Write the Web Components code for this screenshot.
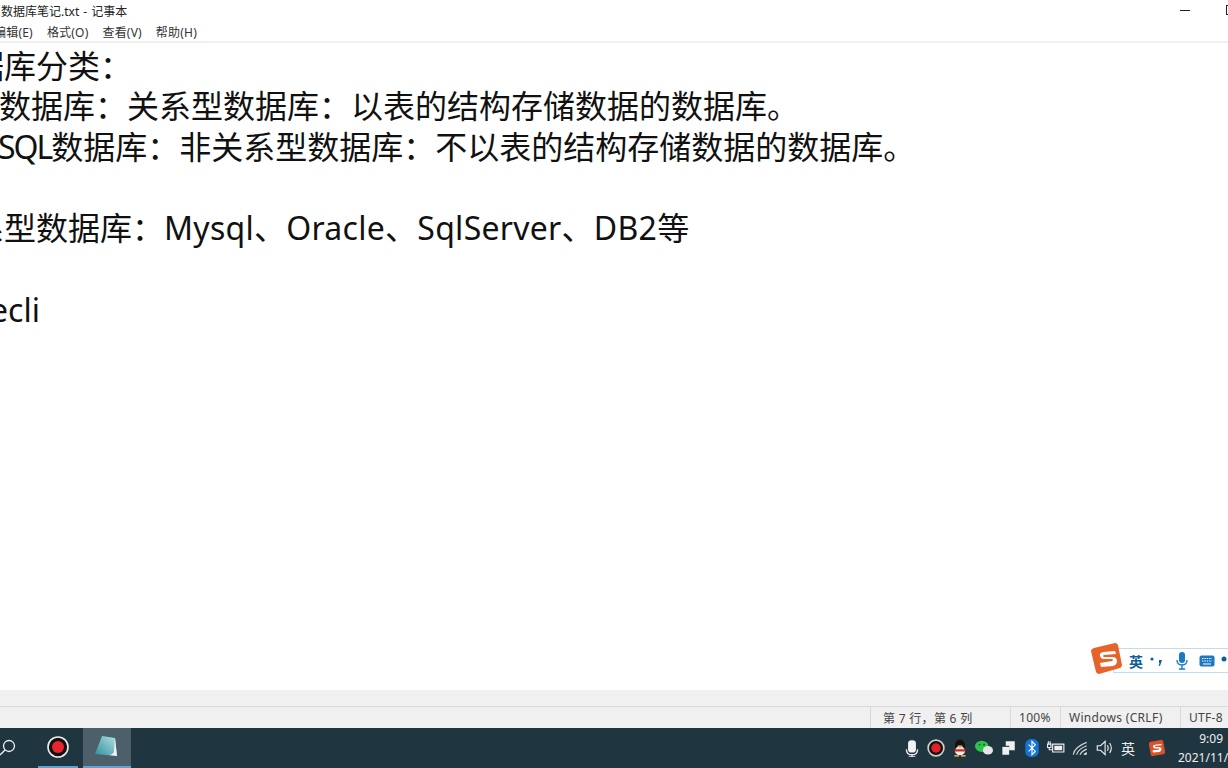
<!DOCTYPE html>
<html lang="zh-CN">
<head>
<meta charset="utf-8">
<title>数据库笔记.txt - 记事本</title>
<style>
  html, body { margin: 0; height: 100%; overflow: hidden; background: #fff; }
  body { font-family: "Noto Sans", "Noto Sans CJK SC", sans-serif; }
</style>
</head>
<body>
<notepad-window>
  <note-line offset="-28">据库分类：</note-line>
  <note-line offset="-1">数据库：关系型数据库：以表的结构存储数据的数据库。</note-line>
  <note-line offset="-2"><span style="letter-spacing:-2px">SQL</span>数据库：非关系型数据库：不以表的结构存储数据的数据库。</note-line>
  <note-line></note-line>
  <note-line offset="-28">系型数据库：<span style="letter-spacing:.27px">Mysql、Oracle、SqlServer、DB2</span>等</note-line>
  <note-line></note-line>
  <note-line offset="-10">ecli</note-line>
</notepad-window>
<ime-bar></ime-bar>
<task-bar></task-bar>

<script>
const FONT = '"Noto Sans", "Noto Sans CJK SC", sans-serif';

class NotepadWindow extends HTMLElement {
  constructor() {
    super();
    this.attachShadow({ mode: 'open' });
  }

  connectedCallback() {
    this.shadowRoot.innerHTML = `
      <style>
        :host { display: flex; flex-direction: column; height: 728px; background: #fff; color: #111; font-family: ${FONT}; overflow: hidden; }
        .title { height: 22px; flex: none; display: flex; align-items: center; justify-content: space-between; font-size: 12px; color: #222; word-spacing: 1px; }
        .title span { padding-left: 1px; }
        .controls { display: flex; align-items: center; height: 100%; overflow: hidden; width: 48px; gap: 36px; box-sizing: border-box; padding-bottom: 2px; }
        .min { width: 10px; height: 1px; background: #222; flex: none; }
        .max { width: 8px; height: 8px; border: 1px solid #222; flex: none; }
        .menu { height: 19px; flex: none; display: flex; gap: 14px; font-size: 12px; letter-spacing: .2px; color: #333; align-items: center; border-bottom: 2px solid #f0f0f0; }
        .menu .edit { margin-left: -6px; }
        .editor { flex: 1; min-height: 0; padding-top: 2.5px; overflow: hidden; white-space: nowrap; }
        .hscroll { height: 16px; flex: none; background: #f0f0f0; }
        .status { height: 21px; flex: none; display: flex; justify-content: flex-end; font-size: 12px; letter-spacing: .3px; color: #444; background: #f0f0f0; border-top: 1px solid #d9d9d9; }
        .status div { border-left: 1px solid #d9d9d9; display: flex; align-items: center; box-sizing: border-box; white-space: nowrap; overflow: hidden; }
      </style>
      <div class="title">
        <span>数据库笔记.txt - 记事本</span>
        <div class="controls"><i class="min"></i><i class="max"></i></div>
      </div>
      <div class="menu">
        <span class="edit">编辑(E)</span><span>格式(O)</span><span>查看(V)</span><span>帮助(H)</span>
      </div>
      <div class="editor"><slot></slot></div>
      <div class="hscroll"></div>
      <div class="status">
        <div style="width:140px;padding-left:12px">第 7 行，第 6 列</div>
        <div style="width:50px;padding-left:8px">100%</div>
        <div style="width:120px;padding-left:8px">Windows (CRLF)</div>
        <div style="width:48px;padding-left:8px">UTF-8</div>
      </div>
    `;
  }
}

class NoteLine extends HTMLElement {
  constructor() {
    super();
    this.attachShadow({ mode: 'open' });
  }

  connectedCallback() {
    const offset = this.getAttribute('offset') || 0;
    this.shadowRoot.innerHTML = `
      <style>
        :host { display: block; height: 40.7px; line-height: 40.7px; font-size: 32px; color: #111; margin-left: ${offset}px; }
      </style>
      <slot></slot>
    `;
  }
}

class ImeBar extends HTMLElement {
  constructor() {
    super();
    this.attachShadow({ mode: 'open' });
  }

  connectedCallback() {
    this.shadowRoot.innerHTML = `
      <style>
        :host { position: absolute; left: 1091px; top: 643px; width: 137px; height: 31px; font-family: ${FONT}; }
        .bar { position: absolute; left: 22px; right: 0; top: 5px; height: 25px; box-sizing: border-box; background: #fff; border: 1px solid #c4dcec; border-right: 0; display: flex; align-items: center; color: #0f5f9f; }
        .zh { margin-left: 15px; font-size: 14px; font-weight: 700; width: 25px; }
        svg { flex: none; display: block; }
        .logo { position: absolute; left: 0; top: 0; z-index: 1; }
      </style>
      <svg class="logo" width="32" height="31" viewBox="0 0 32 31">
        <path d="M3 5 24 0q2 0 3 2l4 20q0 2-2 3L8 31q-2 0-3-2L0 8q0-2 3-3z" fill="#e8622c"/>
        <path d="M24 8 12 9q-4 1-3 4t4 3l8 0q2 1 0 2L9 20l1 4 12-1q4-1 4-5t-5-4l-8 0q-2-1 0-2l12-1z" fill="#fff"/>
      </svg>
      <div class="bar">
        <span class="zh">英</span>
        <svg width="14" height="14" viewBox="0 0 14 14" style="margin-left:5px"><circle cx="3" cy="5" r="1.6" fill="#0f5f9f"/><path d="M10 6h3l-2 6-1.4-.4L10.600 9H10z" fill="#0f5f9f"/></svg>
        <svg width="14" height="18" viewBox="0 0 14 18" style="margin-left:12px"><rect x="4" y="0" width="6" height="11" rx="3" fill="#1b78c2"/><path d="M2 8q0 5 5 5t5-5M7 13v4M4 17h6" fill="none" stroke="#1b78c2" stroke-width="1.400"/></svg>
        <svg width="16" height="12" viewBox="0 0 16 12" style="margin-left:10px"><rect x=".5" y=".5" width="15" height="11" rx="2" fill="#1b78c2"/><path d="M3 3.500h10M3 6h10" stroke="#fff" stroke-dasharray="1.400 1"/><path d="M4 9h8" stroke="#fff"/></svg>
        <svg width="8" height="12" viewBox="0 0 8 12" style="margin-left:5px"><circle cx="4" cy="4" r="2.500" fill="#0f5f9f"/></svg>
      </div>
    `;
  }
}

// icons of the notification area, in order
const TRAY_ICONS = {
  mic: `<rect x="4.500" y="1" width="7" height="11" rx="3" fill="#f2f2f2"/><path d="M3 9q0 5 5 5t5-5M8 14v2M5 16h6" fill="none" stroke="#e8e8e8" stroke-width="1.200"/>`,
  rec: `<circle cx="8" cy="8" r="7" fill="#111" stroke="#ccc" stroke-width="1.500"/><circle cx="8" cy="8" r="4.200" fill="#e0202a"/>`,
  qq: `<ellipse cx="8" cy="6" rx="4.500" ry="5.500" fill="#111"/><ellipse cx="8" cy="10.500" rx="4.500" ry="4" fill="#eee"/><path d="M3.500 9h9l.5 2H3z" fill="#d8242a"/><ellipse cx="8" cy="6.500" rx="2.500" ry="1" fill="#f0a020"/><path d="M3 15h4M9 15h4" stroke="#e8a020" stroke-width="1.500"/>`,
  wechat: `<ellipse cx="6" cy="6.500" rx="6" ry="5" fill="#2fc34a"/><ellipse cx="11.500" cy="10" rx="4.500" ry="3.800" fill="#e6e6e6"/><circle cx="4" cy="5" r=".8" fill="#14532d"/><circle cx="8" cy="5" r=".8" fill="#14532d"/>`,
  copy: `<rect x="6" y="2" width="8" height="8" fill="#efefef"/><rect x="2" y="6" width="7" height="8" fill="#1f3540"/><rect x="3" y="7" width="6" height="7" fill="#efefef"/>`,
  bt: `<rect x="2" y="0" width="12" height="16" rx="5" fill="#1474d4"/><path d="M5 5l6 6-3 3V2l3 3-6 6" fill="none" stroke="#fff"/>`,
  power: `<path d="M.5 4.500v3h3v-3zM1.200 4.500V2M2.800 4.500V2M2 7.500v2h3" fill="none" stroke="#eee"/><path d="M5 4.500h10v7H5z" fill="none" stroke="#eee"/><rect x="6.500" y="6" width="7" height="4" fill="#eee"/>`,
  wifi: `<g fill="none" stroke="#d4d4d4"><path d="M2 14Q3 7 14 3"/><path d="M5 14q1-5 9-8"/><path d="M8 14q1-3 6-5"/></g><path d="M11 14q.5-1.500 3-2.500V14z" fill="#eee"/>`,
  vol: `<path d="M2 6h3l4-4v12l-4-4H2z" fill="none" stroke="#eee"/><path d="M11 5.500q1.500 2.500 0 5M13 3.500q3 4.500 0 9" fill="none" stroke="#eee"/>`,
  sogou: `<rect x="1.500" y="1.500" width="13" height="13" rx="2" fill="#d9532a" transform="rotate(-10 8 8)"/><path d="M12 4.500 6 5q-2 .5-1.500 2T6.500 8.500h3q1 .5 0 1L4 10l.5 2 5.500-.500q2-.5 2-2.500t-2.500-2h-3q-1-.5 0-1l5.500-.5z" fill="#fff"/>`
};

class TrayIcon extends HTMLElement {
  constructor() {
    super();
    this.attachShadow({ mode: 'open' });
  }

  connectedCallback() {
    this.shadowRoot.innerHTML = `
      <style>
        :host { display: flex; width: 24px; justify-content: center; align-items: center; }
        svg { display: block; }
      </style>
      <svg width="18" height="18" viewBox="0 0 16 16">${TRAY_ICONS[this.getAttribute('name')] || ''}</svg>
    `;
  }
}

class TaskBar extends HTMLElement {
  constructor() {
    super();
    this.attachShadow({ mode: 'open' });
  }

  connectedCallback() {
    this.shadowRoot.innerHTML = `
      <style>
        :host { display: flex; height: 40px; background: #1f3540; color: #eee; font-family: ${FONT}; align-items: stretch; overflow: hidden; }
        .search { width: 38px; flex: none; display: flex; align-items: center; }
        .app { flex: none; display: flex; align-items: center; justify-content: center; box-sizing: border-box; border-bottom: 2px solid #5ba3d6; }
        .rec { width: 40px; }
        .note { width: 48px; margin-left: 5px; background: #4d5f69; }
        .spacer { flex: 1; }
        .tray { display: flex; }
        .zh { width: 24px; font-size: 14px; display: flex; align-items: center; justify-content: center; }
        .clock { width: 59px; flex: none; font-size: 12px; line-height: 19px; text-align: right; white-space: nowrap; overflow: hidden; padding-top: 1px; box-sizing: border-box; }
        .clock .t { padding-right: 5px; }
        .clock .d { margin-left: 9px; text-align: left; }
      </style>
      <div class="search">
        <svg width="18" height="20" viewBox="0 0 18 20"><circle cx="9" cy="8" r="5.500" fill="none" stroke="#eee" stroke-width="1.300"/><path d="M5 12 0 17" stroke="#eee" stroke-width="1.500"/></svg>
      </div>
      <div class="app rec">
        <svg width="24" height="24" viewBox="0 0 24 24"><circle cx="12" cy="12" r="10" fill="#111" stroke="#eee" stroke-width="1.600"/><circle cx="12" cy="12" r="6" fill="#e8242c"/></svg>
      </div>
      <div class="app note">
        <svg width="26" height="26" viewBox="0 0 26 26">
          <defs><linearGradient id="pad" x1="0" y1="1" x2="1" y2="0"><stop offset="0" stop-color="#2f8d9f"/><stop offset="1" stop-color="#b5e3e3"/></linearGradient></defs>
          <path d="M8 2 21 4l2 18-22-2z" fill="url(#pad)"/>
          <path d="M21 4l2 18-8-1q5-1 5-4z" fill="#eef4f4"/>
        </svg>
      </div>
      <div class="spacer"></div>
      <div class="tray">
        <tray-icon name="mic"></tray-icon>
        <tray-icon name="rec"></tray-icon>
        <tray-icon name="qq"></tray-icon>
        <tray-icon name="wechat"></tray-icon>
        <tray-icon name="copy"></tray-icon>
        <tray-icon name="bt"></tray-icon>
        <tray-icon name="power"></tray-icon>
        <tray-icon name="wifi"></tray-icon>
        <tray-icon name="vol"></tray-icon>
        <div class="zh">英</div>
        <tray-icon name="sogou" style="margin-left:5px"></tray-icon>
      </div>
      <div class="clock"><div class="t">9:09</div><div class="d">2021/11/</div></div>
    `;
  }
}

customElements.define('notepad-window', NotepadWindow);
customElements.define('note-line', NoteLine);
customElements.define('ime-bar', ImeBar);
customElements.define('tray-icon', TrayIcon);
customElements.define('task-bar', TaskBar);
</script>
</body>
</html>
